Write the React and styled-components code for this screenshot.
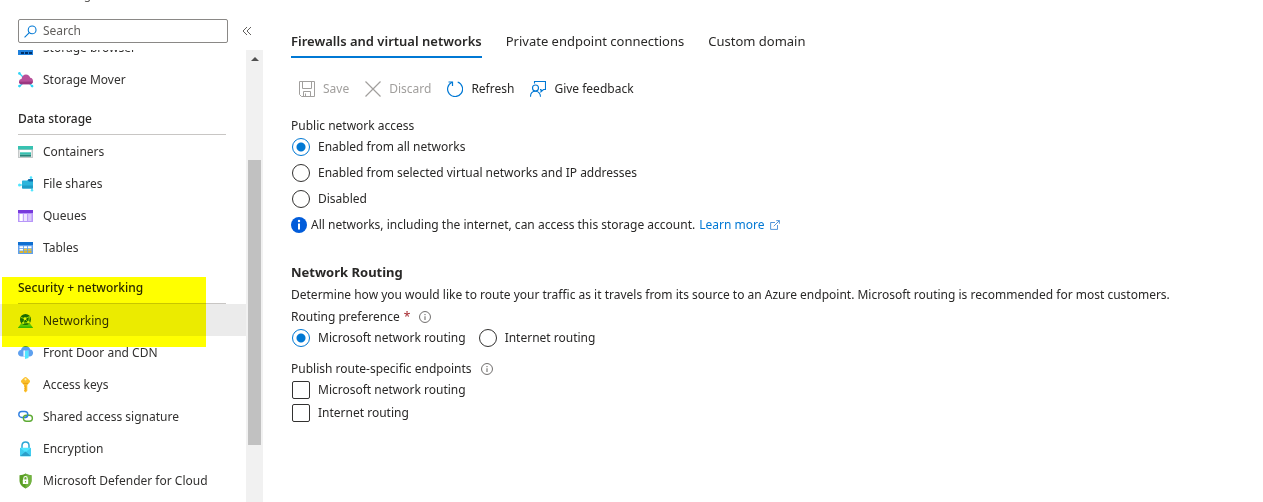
import { useState } from 'react';
import styled, { createGlobalStyle, css } from 'styled-components';

const GlobalStyle = createGlobalStyle`
  * {
    box-sizing: border-box;
  }

  body {
    margin: 0;
    background: #fff;
    color: #292827;
    font-family: 'Noto Sans', 'Open Sans', sans-serif;
    font-size: 12px;
    line-height: 18px;
  }

  button,
  input {
    font: inherit;
    color: inherit;
  }
`;

const Page = styled.div`
  display: flex;
  height: 100vh;
  overflow: hidden;
`;

/* ---------- sidebar ---------- */

const Sidebar = styled.aside`
  display: flex;
  flex-direction: column;
  flex: 0 0 263px;
`;

const ResourceType = styled.div`
  display: flex;
  align-items: flex-end;
  flex: none;
  height: 4px;
  padding-left: 54px;
  overflow: hidden;
  color: #605e5c;
`;

const SearchRow = styled.div`
  display: flex;
  align-items: center;
  flex: none;
  gap: 12px;
  padding: 15px 0 7px 18px;
`;

const SearchBox = styled.label`
  display: flex;
  align-items: center;
  gap: 6px;
  width: 210px;
  height: 24px;
  padding: 0 5px;
  border: 1px solid #8a8886;
  border-radius: 2px;
`;

const SearchInput = styled.input`
  flex: 1;
  min-width: 0;
  padding: 0;
  border: 0;
  outline: 0;
  background: none;

  &::placeholder {
    color: #605e5c;
    opacity: 1;
  }
`;

const CollapseButton = styled.button`
  display: flex;
  padding: 2px;
  border: 0;
  background: none;
  cursor: pointer;
`;

const SidebarBody = styled.div`
  display: flex;
  flex: 1;
  min-height: 0;
`;

const Nav = styled.nav`
  flex: 1;
  overflow: hidden;
`;

const NavGroup = styled.section`
  position: relative;

  &:first-child {
    margin: -19px 0 -1px;
  }
`;

const NavHeading = styled.h2`
  display: flex;
  align-items: flex-end;
  height: 41px;
  margin: 0 20px 0 18px;
  padding-bottom: 6px;
  border-bottom: 1px solid #c8c6c4;
  font-size: 12px;
  font-weight: 500;
`;

const NavItem = styled.a`
  display: flex;
  align-items: center;
  gap: 9px;
  height: 32px;
  padding: 2px 0 0 18px;
  background: ${({ $selected }) => ($selected ? '#ebebeb' : 'transparent')};
  color: #323130;
  text-decoration: none;

  svg {
    flex: none;
  }
`;

const Highlight = styled.div`
  position: absolute;
  top: 14px;
  left: 2px;
  width: 204px;
  height: 70px;
  background: #ff0;
  mix-blend-mode: multiply;
  pointer-events: none;
`;

const ScrollBar = styled.div`
  display: flex;
  flex-direction: column;
  align-items: center;
  flex: 0 0 17px;
  background: #f1f1f1;
`;

const ScrollArrow = styled.div`
  display: flex;
  align-items: center;
  justify-content: center;
  flex: 0 0 17px;
`;

const ScrollThumb = styled.div`
  flex: 0 0 285px;
  width: 13px;
  margin-top: 93px;
  background: #c1c1c1;
`;

/* ---------- content ---------- */

const Main = styled.main`
  flex: 1;
  min-width: 0;
  padding: 26px 28px;
`;

const Tabs = styled.div`
  display: flex;
  gap: 24px;
`;

const Tab = styled.button`
  height: 32px;
  padding: 0;
  border: 0;
  border-bottom: 2px solid transparent;
  background: none;
  font-size: 13px;
  cursor: pointer;

  ${({ $active }) =>
    $active &&
    css`
      border-color: #0078d4;
      font-weight: 600;
    `}
`;

const Toolbar = styled.div`
  display: flex;
  gap: 16px;
  padding: 19px 8px 16px;
`;

const Command = styled.button`
  display: flex;
  align-items: center;
  gap: 8px;
  height: 24px;
  padding: 0;
  border: 0;
  background: none;
  cursor: pointer;

  svg {
    color: #0078d4;
  }

  &:disabled {
    color: #a19f9d;
    cursor: default;
  }

  &:disabled svg {
    color: #a19f9d;
  }
`;

const Fieldset = styled.fieldset`
  margin: 0 0 ${({ $space }) => $space || 0}px;
  padding: 0;
  border: 0;
`;

const Legend = styled.legend`
  display: flex;
  align-items: center;
  gap: 4px;
  height: 18px;
  padding: 0;

  svg {
    margin-left: 5px;
  }
`;

const Required = styled.span`
  color: #a4262c;
`;

const Options = styled.div`
  display: flex;
  flex-direction: ${({ $inline }) => ($inline ? 'row' : 'column')};
  gap: ${({ $gap }) => $gap}px;
  padding-top: 3px;
`;

const Option = styled.label`
  display: flex;
  align-items: center;
  gap: 8px;
  padding-left: 1px;
`;

const Radio = styled.input`
  appearance: none;
  flex: none;
  width: 18px;
  height: 18px;
  margin: 0;
  border: 1px solid #323130;
  border-radius: 50%;

  &:checked {
    border-color: #0078d4;
    background: radial-gradient(circle, #0078d4 4px, transparent 5px);
  }
`;

const Checkbox = styled.input`
  appearance: none;
  flex: none;
  width: 18px;
  height: 18px;
  margin: 0;
  border: 1px solid #323130;
  border-radius: 2px;

  &:checked {
    border-color: #0078d4;
    background: #0078d4;
  }
`;

const InfoLine = styled.p`
  display: flex;
  align-items: center;
  gap: 4px;
  margin: 8px 0 29px;
`;

const Link = styled.a`
  display: inline-flex;
  align-items: center;
  gap: 6px;
  color: #0078d4;
  text-decoration: none;
`;

const SectionTitle = styled.h2`
  margin: 0 0 5px;
  font-size: 13px;
  font-weight: 700;
  line-height: 18px;
`;

const Description = styled.p`
  margin: 0 0 4px;
`;

/* ---------- icons ---------- */

const Svg = ({ size = 16, children, ...rest }) => (
  <svg width={size} height={size} viewBox="0 0 16 16" fill="none" aria-hidden="true" {...rest}>
    {children}
  </svg>
);

const BrowserIcon = () => (
  <Svg>
    <rect y="1" width="15" height="14" fill="#1f80dc" />
    <path d="M3 12h3v2H3zM7 12h3v2H7zM11 12h3v2h-3z" fill="#003067" />
  </Svg>
);

const MoverIcon = () => (
  <Svg>
    <path d="M1 1l4 4M1 15l4-4M15 15l-4-4" stroke="#32d4f5" strokeWidth="1.2" />
    <circle cx="1.4" cy="1.4" r="1.3" fill="#32d4f5" />
    <circle cx="1.4" cy="14" r="1.3" fill="#32d4f5" />
    <circle cx="14" cy="14" r="1.3" fill="#32d4f5" />
    <path
      d="M3.8 12.3C2 12.3 1 11.2 1 9.700 1 8.200 2 7.200 3.500 7 3.800 4.300 5.700 2.500 8 2.500c2.200 0 3.700 1.300 4.200 3.300 1.700.2 2.800 1.400 2.800 3.100 0 2-1.400 3.400-3.300 3.400z"
      fill="#b8509a"
    />
    <path d="M1 9.700c0 1.500 1 2.600 2.800 2.600h7.900c1.700 0 3-1.100 3.300-2.800z" fill="#9b3780" />
  </Svg>
);

const ContainersIcon = () => (
  <Svg>
    <rect y="2" width="15" height="12" rx=".6" fill="#c4c8c8" />
    <rect y="2" width="15" height="3.500" fill="#37c2b1" />
    <rect x="1.500" y="6" width="12" height="7" fill="#fff" />
    <rect x="2" y="8.300" width="11" height="2.400" fill="#37c2b1" />
    <rect x="2" y="10.700" width="11" height="2" fill="#258277" />
  </Svg>
);

const FileSharesIcon = () => (
  <Svg>
    <path d="M1 9h5M13 2v3M14 12v2.500" stroke="#32d4f5" />
    <circle cx="1.500" cy="9" r="1.500" fill="#50e6ff" />
    <circle cx="13" cy="1.500" r="1.300" fill="#50e6ff" />
    <circle cx="14" cy="14.300" r="1.200" fill="#50e6ff" />
    <path d="M9.500 4.500L10.500 3H15v8.500H9.500z" fill="#0f6cad" />
    <path d="M4 5.500c0-.6.4-1 1-1h5l1 1H15v6c0 .6-.4 1-1 1H5c-.6 0-1-.4-1-1z" fill="#2cb5dc" />
    <path d="M4 9.500h11v2c0 .6-.4 1-1 1H5c-.6 0-1-.4-1-1z" fill="#1f9cc6" />
  </Svg>
);

const QueuesIcon = () => (
  <Svg>
    <rect y="2" width="15" height="12" rx=".6" fill="#b796f9" />
    <rect y="2" width="15" height="3" fill="#773adc" />
    <path d="M1.500 6h3.300v7H1.500z" fill="#fff" />
    <path d="M5.800 6h3.300v7H5.800z" fill="#eee5ff" />
    <path d="M10.100 6h3.400v7h-3.400z" fill="#dac8fb" />
  </Svg>
);

const TablesIcon = () => (
  <Svg>
    <rect y="2" width="15" height="12" rx=".6" fill="#5ea0ef" />
    <rect y="2" width="15" height="3" fill="#0f6fd0" />
    <path d="M1.500 6.200h3.500v2H1.500zM5.800 6.200h3.400v2H5.800zM10 6.200h3.500v2H10z" fill="#fff" />
    <path d="M1.500 9h3.500v1.500H1.500z" fill="#fff" />
    <path d="M5.800 8.700h3.400v1.800H5.800zM10 8.700h3.500v1.800H10z" fill="#f2c636" />
    <path d="M1.500 11h3.500v2H1.500zM5.800 11h3.400v2H5.800zM10 11h3.500v2H10z" fill="#d9b534" />
  </Svg>
);

const NetworkingIcon = () => (
  <Svg>
    <path d="M0 15l3-4.500h9L15 15z" fill="#5fc84f" />
    <path d="M0 15l1-1.500h13L15 15z" fill="#38b818" />
    <circle cx="7.500" cy="6.500" r="5.500" fill="#1b6b3a" />
    <path
      d="M3 4.500l4 1.200 4.500-2.200M7 5.700l-2 4.500 5.500-.7L7 5.700M10.500 9.500l1-6"
      stroke="#9fe0a0"
      strokeWidth=".9"
    />
    <circle cx="7" cy="5.700" r="1.400" fill="#e6f7e0" />
    <circle cx="10.500" cy="9.300" r="1.200" fill="#d0f0c8" />
    <circle cx="5" cy="10" r="1" fill="#d0f0c8" />
  </Svg>
);

const FrontDoorIcon = () => (
  <Svg>
    <path
      d="M3.600 11.500C1.500 11.500 0 10.200 0 8.300c0-1.700 1.300-3 3-3.200C3.400 2.700 5.300 1 7.700 1c2.200 0 3.900 1.300 4.500 3.400 1.700.2 2.900 1.600 2.900 3.400 0 2.100-1.500 3.700-3.600 3.700z"
      fill="#5ea0ef"
    />
    <path d="M5.500 5.500h5v6h-5z" fill="#9cc9f7" />
    <path d="M7 6.500l3.500-1.200v7.700L7 14z" fill="#50e6ff" />
    <path d="M5.500 5.500h1.500v6H5.500z" fill="#eaf6ff" />
  </Svg>
);

const KeyIcon = () => (
  <Svg>
    <path
      d="M7.500 0c.5 0 .9.200 1.200.5l2.900 2.800c.6.600.6 1.500 0 2.100L9.300 7.900v5.900L7.500 15.500 6 14v-1l.8-.8-.8-.9.800-.9-.8-.8V7.900L3.400 5.400c-.6-.6-.6-1.500 0-2.100L6.300.5C6.600.2 7 0 7.500 0z"
      fill="#fbbf2b"
    />
    <circle cx="7.500" cy="2.300" r="1.100" fill="#fff3c4" />
    <path d="M5 6.400h5" stroke="#e59a10" strokeWidth=".8" />
    <path d="M7.300 8.500v5" stroke="#e59a10" strokeWidth=".7" />
  </Svg>
);

const SignatureIcon = () => (
  <Svg>
    <rect x=".8" y="2.500" width="9" height="6" rx="3" stroke="#2f7fe0" strokeWidth="1.400" />
    <rect x="5.400" y="6.300" width="9" height="6" rx="3" stroke="#5eab35" strokeWidth="1.400" />
    <path d="M6.800 8.500c1.700 0 3-1.300 3-3" stroke="#2f7fe0" strokeWidth="1.400" />
  </Svg>
);

const LockIcon = () => (
  <Svg>
    <path d="M4 7.500V4.500C4 2.300 5.500.9 7.500.9S11 2.300 11 4.500v3" stroke="#2ba6d4" strokeWidth="1.500" />
    <rect x="2" y="6.800" width="11" height="8.400" rx=".6" fill="#50e6ff" />
    <path d="M2 6.800l5.500 4.400L13 6.800v7.800c0 .4-.2.600-.6.600H2.600c-.4 0-.6-.2-.6-.6z" fill="#40cdf0" />
    <path d="M2.200 15l5.300-4.500 5.300 4.500z" fill="#2c9fc9" />
  </Svg>
);

const DefenderIcon = () => (
  <Svg>
    <path
      d="M7.500.5c1.700 1.300 3.700 1.600 6 1.700v5.200c0 3.600-2.600 6.200-6 8.100-3.400-1.900-6-4.500-6-8.100V2.200c2.300-.1 4.300-.4 6-1.700z"
      fill="#5a9f24"
    />
    <path d="M7.500.5c1.700 1.300 3.700 1.600 6 1.700v5.200c0 3.600-2.600 6.200-6 8.100z" fill="#72b340" />
    <path d="M5.800 7V5.400c0-1.200.7-1.900 1.700-1.900s1.700.7 1.700 1.900V7" stroke="#fff" strokeWidth="1.100" />
    <rect x="4.800" y="6.600" width="5.400" height="4.400" rx=".5" fill="#fff" />
    <circle cx="7.500" cy="8.700" r=".7" fill="#5a9f24" />
  </Svg>
);

const SearchIcon = () => (
  <Svg size={13}>
    <circle cx="10" cy="6" r="4.800" stroke="#0078d4" strokeWidth="1.300" />
    <path d="M6.500 9.500L.7 15.300" stroke="#0078d4" strokeWidth="1.300" />
  </Svg>
);

const CollapseIcon = () => (
  <svg width="10" height="10" viewBox="0 0 10 10" fill="none" aria-hidden="true">
    <path d="M5 1L1 5l4 4M9 1L5 5l4 4" stroke="#605e5c" />
  </svg>
);

const SaveIcon = () => (
  <Svg stroke="currentColor">
    <path d="M.5.5h15v15h-13l-2-2z" />
    <path d="M3.500.5v7h9v-7M4.500 15.500v-5h7v5M6.500 12.500v3" />
  </Svg>
);

const DiscardIcon = () => (
  <Svg stroke="currentColor">
    <path d="M.5.500l15 15M15.500.5l-15 15" strokeWidth="1.200" />
  </Svg>
);

const RefreshIcon = () => (
  <Svg stroke="currentColor" strokeWidth="1.200">
    <path d="M10.700 1A7.500 7.500 0 1 1 5 1.200" />
    <path d="M1.500 1h4v4" />
  </Svg>
);

const FeedbackIcon = () => (
  <Svg stroke="currentColor" strokeWidth="1.100">
    <path d="M4.500 2.500v-2h11v8h-2l-2.500 2.200V8.500h-1" />
    <circle cx="5.500" cy="7" r="3" />
    <path d="M.5 15.800c0-3.300 2-5.500 5-5.500s5 2.200 5 5.500" />
  </Svg>
);

const InfoFilledIcon = () => (
  <Svg>
    <circle cx="8" cy="8" r="8" fill="#015cda" />
    <circle cx="8" cy="4" r="1.200" fill="#fff" />
    <path d="M7 6.500h2v6H7z" fill="#fff" />
  </Svg>
);

const InfoIcon = () => (
  <Svg size={12}>
    <circle cx="8" cy="8" r="7.300" stroke="#605e5c" strokeWidth="1.200" />
    <path d="M8 7v5M8 4v1.500" stroke="#605e5c" strokeWidth="1.300" />
  </Svg>
);

const ExternalIcon = () => (
  <Svg size={10} stroke="#2b7cd0" strokeWidth="1.300">
    <path d="M8 4H1v11h11V8M10 1h5v5M15 1L6 10" />
  </Svg>
);

/* ---------- data ---------- */

const navGroups = [
  {
    items: [
      { label: 'Storage browser', Icon: BrowserIcon },
      { label: 'Storage Mover', Icon: MoverIcon },
    ],
  },
  {
    title: 'Data storage',
    items: [
      { label: 'Containers', Icon: ContainersIcon },
      { label: 'File shares', Icon: FileSharesIcon },
      { label: 'Queues', Icon: QueuesIcon },
      { label: 'Tables', Icon: TablesIcon },
    ],
  },
  {
    title: 'Security + networking',
    highlighted: true,
    items: [
      { label: 'Networking', Icon: NetworkingIcon, selected: true },
      { label: 'Front Door and CDN', Icon: FrontDoorIcon },
      { label: 'Access keys', Icon: KeyIcon },
      { label: 'Shared access signature', Icon: SignatureIcon },
      { label: 'Encryption', Icon: LockIcon },
      { label: 'Microsoft Defender for Cloud', Icon: DefenderIcon },
    ],
  },
];

const tabs = ['Firewalls and virtual networks', 'Private endpoint connections', 'Custom domain'];

const accessOptions = [
  'Enabled from all networks',
  'Enabled from selected virtual networks and IP addresses',
  'Disabled',
];

const routingOptions = ['Microsoft network routing', 'Internet routing'];

export default function App() {
  const [tab, setTab] = useState(tabs[0]);
  const [access, setAccess] = useState(accessOptions[0]);
  const [routing, setRouting] = useState(routingOptions[0]);

  return (
    <Page>
      <GlobalStyle />
      <Sidebar>
        <ResourceType>Storage account</ResourceType>
        <SearchRow>
          <SearchBox>
            <SearchIcon />
            <SearchInput type="text" placeholder="Search" aria-label="Search" />
          </SearchBox>
          <CollapseButton type="button" aria-label="Collapse menu">
            <CollapseIcon />
          </CollapseButton>
        </SearchRow>
        <SidebarBody>
          <Nav>
            {navGroups.map(({ title, items, highlighted }) => (
              <NavGroup key={title || 'top'}>
                {title && <NavHeading>{title}</NavHeading>}
                {items.map(({ label, Icon, selected }) => (
                  <NavItem key={label} href="#" $selected={selected}>
                    <Icon />
                    {label}
                  </NavItem>
                ))}
                {highlighted && <Highlight />}
              </NavGroup>
            ))}
          </Nav>
          <ScrollBar>
            <ScrollArrow>
              <svg width="8" height="4" viewBox="0 0 8 4" aria-hidden="true">
                <path d="M0 4l4-4 4 4z" fill="#505050" />
              </svg>
            </ScrollArrow>
            <ScrollThumb />
          </ScrollBar>
        </SidebarBody>
      </Sidebar>

      <Main>
        <Tabs role="tablist">
          {tabs.map((name) => (
            <Tab
              key={name}
              type="button"
              role="tab"
              aria-selected={tab === name}
              $active={tab === name}
              onClick={() => setTab(name)}
            >
              {name}
            </Tab>
          ))}
        </Tabs>

        <Toolbar>
          <Command type="button" disabled>
            <SaveIcon />
            Save
          </Command>
          <Command type="button" disabled>
            <DiscardIcon />
            Discard
          </Command>
          <Command type="button">
            <RefreshIcon />
            Refresh
          </Command>
          <Command type="button">
            <FeedbackIcon />
            Give feedback
          </Command>
        </Toolbar>

        <Fieldset>
          <Legend>Public network access</Legend>
          <Options $gap={8}>
            {accessOptions.map((option) => (
              <Option key={option}>
                <Radio
                  type="radio"
                  name="access"
                  checked={access === option}
                  onChange={() => setAccess(option)}
                />
                {option}
              </Option>
            ))}
          </Options>
        </Fieldset>

        <InfoLine>
          <InfoFilledIcon />
          All networks, including the internet, can access this storage account.
          <Link href="#">
            Learn more
            <ExternalIcon />
          </Link>
        </InfoLine>

        <SectionTitle>Network Routing</SectionTitle>
        <Description>
          Determine how you would like to route your traffic as it travels from its source to an Azure endpoint. Microsoft routing is recommended for most customers.
        </Description>

        <Fieldset $space={13}>
          <Legend>
            Routing preference <Required>*</Required>
            <InfoIcon />
          </Legend>
          <Options $inline $gap={12}>
            {routingOptions.map((option) => (
              <Option key={option}>
                <Radio
                  type="radio"
                  name="routing"
                  checked={routing === option}
                  onChange={() => setRouting(option)}
                />
                {option}
              </Option>
            ))}
          </Options>
        </Fieldset>

        <Fieldset>
          <Legend>
            Publish route-specific endpoints
            <InfoIcon />
          </Legend>
          <Options $gap={5}>
            {routingOptions.map((option) => (
              <Option key={option}>
                <Checkbox type="checkbox" />
                {option}
              </Option>
            ))}
          </Options>
        </Fieldset>
      </Main>
    </Page>
  );
}
